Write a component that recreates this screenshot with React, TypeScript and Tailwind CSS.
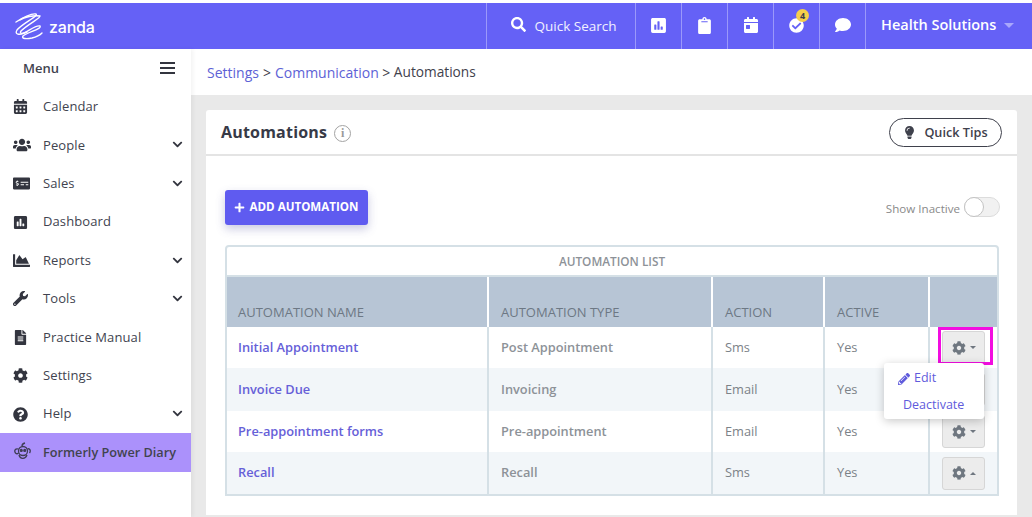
import {
  FaCalendarAlt,
  FaCalendarDay,
  FaChartArea,
  FaCheckCircle,
  FaChevronDown,
  FaClipboard,
  FaCog,
  FaComment,
  FaFileAlt,
  FaLightbulb,
  FaMoneyCheckAlt,
  FaPencilAlt,
  FaPlus,
  FaPoll,
  FaQuestionCircle,
  FaSearch,
  FaUsers,
  FaWrench,
} from "react-icons/fa";
import type { IconType } from "react-icons";

const menuItems: { label: string; icon: IconType; more?: boolean; size: number }[] = [
  { label: "Calendar", icon: FaCalendarAlt, size: 15 },
  { label: "People", icon: FaUsers, more: true, size: 18 },
  { label: "Sales", icon: FaMoneyCheckAlt, more: true, size: 17 },
  { label: "Dashboard", icon: FaPoll, size: 15 },
  { label: "Reports", icon: FaChartArea, more: true, size: 17 },
  { label: "Tools", icon: FaWrench, more: true, size: 15 },
  { label: "Practice Manual", icon: FaFileAlt, size: 15 },
  { label: "Settings", icon: FaCog, size: 15 },
  { label: "Help", icon: FaQuestionCircle, more: true, size: 15 },
];

const rows = [
  { name: "Initial Appointment", type: "Post Appointment", action: "Sms", h: "h-[41px]" },
  { name: "Invoice Due", type: "Invoicing", action: "Email", h: "h-[43px]" },
  { name: "Pre-appointment forms", type: "Pre-appointment", action: "Email", h: "h-[41px]" },
  { name: "Recall", type: "Recall", action: "Sms", h: "h-[42px]" },
];

const gridCols = "grid grid-cols-[260px_224px_112px_105px_1fr]";

function Logo() {
  return (
    <svg width="30" height="30" viewBox="0 0 30 30" fill="none" stroke="white" strokeWidth="1.4" strokeLinecap="round">
      <path d="M2 10 C8 6 18 1 22 2 C25 4 9 11 3 18 C0 23 6 23 10 21 C16 18 22 13 26 14 C28 17 14 20 9 24 C7 27 13 27 18 26 C22 25 26 23 28 21" />
      <path d="M6 8 C10 5 20 3 26 4 C27 6 14 12 7 19 C5 22 9 22 13 20" />
    </svg>
  );
}

function Bee() {
  return (
    <svg width="17" height="20" viewBox="0 0 17 20" fill="none" stroke="#3f3d56" strokeWidth="1.3">
      <circle cx="9" cy="9" r="4.5" />
      <circle cx="7.3" cy="8.4" r="0.9" fill="#3f3d56" />
      <circle cx="10.7" cy="8.4" r="0.9" fill="#3f3d56" />
      <path d="M5 13 C6 17 11 18 13 13" />
      <path d="M4.5 7 C1 6 0 9 1.5 11 C2.5 12 4 11.5 4.5 11" />
      <path d="M13.5 7 C16 6 17 9 15.5 11" />
      <path d="M8 4 C8 3 9 1.5 11 1" />
    </svg>
  );
}

function HeaderIcon({ children }: { children: React.ReactNode }) {
  return (
    <div className="relative flex w-[46px] items-center justify-center border-l border-[#9b98fa] pb-[2px] text-white">
      {children}
    </div>
  );
}

function GearButton({ up, className }: { up?: boolean; className?: string }) {
  return (
    <div className={`flex h-[33px] w-[43px] items-center justify-center gap-1 rounded-[3px] border border-[#d6d6d6] bg-[#ececec] text-[#6f7780] ${className ?? ""}`}>
      <FaCog size={14} />
      <span className={up ? "h-0 w-0 border-x-[3px] border-b-[3px] border-x-transparent border-b-[#6f7780]" : "h-0 w-0 border-x-[3px] border-t-[3px] border-x-transparent border-t-[#6f7780]"} />
    </div>
  );
}

export default function App() {
  return (
    <div className="h-[517px] w-[1032px] overflow-hidden bg-white pt-[3px] font-['Open_Sans',sans-serif] text-[13px]">
      <header className="flex h-[46px] bg-[#6561f6]">
        <div className="flex w-[486px] items-center gap-[5px] pl-[14px] pt-[1px]">
          <Logo />
          <span className="font-['Inter',sans-serif] text-[16px] font-medium tracking-[-0.2px] text-white">zanda</span>
        </div>
        <div className="flex w-[149px] items-center justify-center gap-2 border-l border-[#9b98fa] pl-[6px] text-white">
          <FaSearch size={15} className="mb-1" />
          <span className="text-[13.5px] text-[#f1f0ff]">Quick Search</span>
        </div>
        <HeaderIcon><FaPoll size={17} /></HeaderIcon>
        <HeaderIcon><FaClipboard size={17} /></HeaderIcon>
        <HeaderIcon><FaCalendarDay size={16} /></HeaderIcon>
        <HeaderIcon>
          <FaCheckCircle size={15} />
          <span className="absolute left-[22px] top-[6px] flex h-[13px] w-[13px] items-center justify-center rounded-full bg-[#f5cf4b] text-[9px] font-bold text-[#3c3c4a]">4</span>
        </HeaderIcon>
        <HeaderIcon><FaComment size={16} /></HeaderIcon>
        <div className="flex flex-1 items-center border-l border-[#9b98fa] pb-[3px] pl-[15px] text-white">
          <span className="text-[14.5px] font-semibold">Health Solutions</span>
          <span className="ml-[8px] mt-[2px] h-0 w-0 border-x-[5px] border-t-[5px] border-x-transparent border-t-[#a9a7fb]" />
        </div>
      </header>

      <div className="flex h-[468px]">
        <aside className="relative z-10 w-[191px] shrink-0 bg-white text-[#41434f] shadow-[2px_0_4px_rgba(0,0,0,0.05)]">
          <div className="flex h-[38.8px] items-center justify-between pl-[23px] pr-[16px]">
            <span className="text-[13px] font-semibold">Menu</span>
            <div className="flex w-[15px] flex-col gap-[3px]">
              <span className="h-[2px] bg-[#33353f]" />
              <span className="h-[2px] bg-[#33353f]" />
              <span className="h-[2px] bg-[#33353f]" />
            </div>
          </div>
          {menuItems.map((item) => {
            const Icon = item.icon;
            return (
              <div key={item.label} className="flex h-[38.4px] items-center pl-[13px] pr-[8px]">
                <span className="flex w-[30px] justify-start text-[#33353f]">
                  <Icon size={item.size} />
                </span>
                <span className="flex-1 font-medium tracking-[0.1px]">{item.label}</span>
                {item.more ? <FaChevronDown size={11} className="mb-[1px] text-[#33353f]" /> : null}
              </div>
            );
          })}
          <div className="flex h-[38.2px] items-center bg-[#ab91fb] pl-[14px]">
            <span className="w-[29px]"><Bee /></span>
            <span className="text-[12.7px] font-semibold text-[#41434f]">Formerly Power Diary</span>
          </div>
        </aside>

        <main className="flex min-w-0 flex-1 flex-col bg-[#e9e9e9]">
          <div className="flex h-[46px] shrink-0 items-center bg-white pl-[16px] text-[14px] text-[#3f414c]">
            <span className="font-medium text-[#5d62d6]">Settings</span>
            <span className="mx-[4px]">&gt;</span>
            <span className="font-medium text-[#5d62d6]">Communication</span>
            <span className="mx-[3.5px]">&gt;</span>
            <span className="text-[13.7px]">Automations</span>
          </div>

          <section className="ml-[15px] mr-[15px] mt-[15px] h-[405px] rounded-t-[3px] bg-white">
            <div className="flex h-[46px] items-center justify-between border-b-2 border-[#e4e4e4] pl-[15px] pr-[15px]">
              <div className="flex items-center gap-[7px]">
                <h1 className="text-[16px] font-bold tracking-[0.2px] text-[#373a47]">Automations</h1>
                <span className="mt-[2px] flex h-[17px] w-[17px] items-center justify-center rounded-full border-[1.5px] border-[#a3a3a3] font-['Liberation_Serif',serif] text-[12px] font-bold text-[#9a9a9a]">i</span>
              </div>
              <div className="mt-[1px] flex h-[29px] w-[113px] items-center justify-center gap-[8px] rounded-full border border-[#3f414c] text-[12.7px] font-semibold text-[#3f414c]">
                <FaLightbulb size={13} />
                <span>Quick Tips</span>
              </div>
            </div>

            <div className="flex h-[89px] items-start justify-between pl-[19px] pr-[17px] pt-[34px]">
              <div className="flex h-[35px] w-[143px] items-center justify-center gap-[4px] rounded-[3px] bg-[#5f5bf0] pb-[1px] text-[11.6px] font-bold text-white shadow-[0_4px_10px_rgba(80,80,160,0.3)]">
                <FaPlus size={11} />
                <span className="mb-[1px]">ADD AUTOMATION</span>
              </div>
              <div className="mt-[7px] flex items-center gap-[4px]">
                <span className="mt-[3px] text-[11.6px] text-[#8a8a8a]">Show Inactive</span>
                <div className="h-[20px] w-[36px] rounded-full border border-[#dcdcdc] bg-[#f1f1f1]">
                  <div className="-ml-px -mt-px h-[20px] w-[20px] rounded-full border border-[#c3c3c3] bg-white" />
                </div>
              </div>
            </div>

            <div className="relative ml-[19px] mr-[18px] rounded-t-[4px] border-2 border-[#d5e0e6] text-[#7c8288]">
              <div className="flex h-[28px] items-center justify-center pt-[1px] text-[11.8px] font-semibold text-[#8d9298]">AUTOMATION LIST</div>
              <div className={`${gridCols} h-[52px] border-t-2 border-[#d5e0e6] bg-[#b7c5d5] text-[13px] font-medium text-[#6d7884]`}>
                {["AUTOMATION NAME", "AUTOMATION TYPE", "ACTION", "ACTIVE", ""].map((title, index) => (
                  <div key={index} className={`flex items-end pb-[5px] ${index > 0 ? "border-l-2 border-white pl-[12px]" : "pl-[11px]"}`}>
                    {title}
                  </div>
                ))}
              </div>
              {rows.map((row, index) => (
                <div key={row.name} className={`${gridCols} ${row.h} ${index % 2 === 1 ? "bg-[#f2f6f9]" : "bg-white"} text-[12.8px] font-medium`}>
                  <div className="flex items-center pl-[11px] font-semibold text-[#6660d8]">{row.name}</div>
                  <div className="flex items-center border-l-2 border-[#d5e0e6] pl-[12px] font-semibold text-[#8d9298]">{row.type}</div>
                  <div className="flex items-center border-l-2 border-[#d5e0e6] pl-[12px]">{row.action}</div>
                  <div className="flex items-center border-l-2 border-[#d5e0e6] pl-[12px]">Yes</div>
                  <div className="flex items-center justify-center border-l-2 border-[#d5e0e6]">
                    {index < 3 ? <GearButton /> : <GearButton up />}
                  </div>
                </div>
              ))}
              {/* pink highlight + open dropdown sit over the table */}
              <div className="absolute left-[711px] top-[80px] h-[38px] w-[55px] border-[3px] border-[#f20de0]" />
              <div className="absolute left-[657px] top-[116px] flex h-[56px] w-[100px] flex-col rounded-[3px] bg-white text-[#5f5bdc] shadow-[0_2px_10px_rgba(0,0,0,0.22)]">
                <div className="flex h-[28px] items-center gap-[4px] pl-[14px] pt-[3px] text-[12.5px] font-medium">
                  <FaPencilAlt size={12} />
                  <span>Edit</span>
                </div>
                <div className="flex h-[28px] items-center pl-[19px] pt-[1px] text-[12.5px] font-medium">Deactivate</div>
              </div>
            </div>
          </section>
        </main>
      </div>
    </div>
  );
}
